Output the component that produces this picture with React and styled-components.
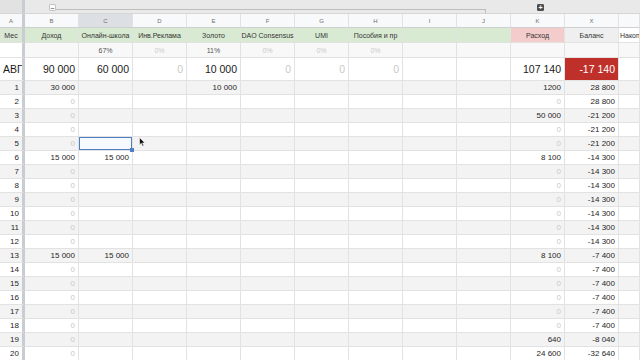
import React from "react";
import styled, { createGlobalStyle } from "styled-components";

const GlobalStyle = createGlobalStyle`
  html, body {
    margin: 0;
    padding: 0;
    background: #fff;
    overflow: hidden;
  }
  body {
    font-family: "Liberation Sans", Arial, sans-serif;
  }
`;

const COLS = "25px repeat(11, 54px) 1fr";
const LETTERS = ["A", "B", "C", "D", "E", "F", "G", "H", "I", "J", "K", "X", ""];
const KEYS = ["A", "B", "C", "D", "E", "F", "G", "H", "I", "J", "K", "X", "N"];

const Sheet = styled.div`
  position: relative;
  width: 640px;
  height: 360px;
  overflow: hidden;
  background: #fff;
  color: #222;
`;

const GroupBar = styled.div`
  display: flex;
  height: 14px;
  background: #e9e9e9;
  border-bottom: 1px solid #d6d6d6;
  box-sizing: border-box;
`;

const FrozenStub = styled.div`
  width: 25px;
  flex: none;
  background: #e2e2e2;
  border-right: 3px solid #c9ccd0;
  box-sizing: border-box;
`;

const GroupTrack = styled.div`
  display: flex;
  align-items: flex-start;
  padding: 4px 0 0 24px;
`;

const GroupButton = styled.div`
  width: 7px;
  height: 7px;
  flex: none;
  box-sizing: border-box;
  display: flex;
  align-items: center;
  justify-content: center;
  font-size: 7px;
  line-height: 1;
  font-weight: bold;
  border-radius: 1px;
  background: ${(p) => (p.$dark ? "#4f4f4f" : "#fbfbfb")};
  color: ${(p) => (p.$dark ? "#fff" : "#777")};
  border: 1px solid ${(p) => (p.$dark ? "#4f4f4f" : "#c4c4c4")};
`;

const GroupLine = styled.div`
  width: ${(p) => p.$w}px;
  height: 4px;
  flex: none;
  margin-top: 5px;
  margin-right: 51px;
  border-top: 1px solid #bdbdbd;
  border-right: 1px solid #bdbdbd;
  box-sizing: border-box;
`;

const Row = styled.div`
  display: grid;
  grid-template-columns: ${COLS};
  height: ${(p) => p.$h}px;
  background: ${(p) => p.$bg || "#fff"};
`;

const Cell = styled.div`
  position: relative;
  box-sizing: border-box;
  display: flex;
  align-items: center;
  justify-content: ${(p) =>
    p.$align === "left" ? "flex-start" : p.$align === "center" ? "center" : "flex-end"};
  padding: 0 3px;
  white-space: nowrap;
  overflow: hidden;
  font-size: ${(p) => p.$size || 8}px;
  color: ${(p) => (p.$muted ? "#c9c9c9" : p.$color || "#222")};
  background: ${(p) => p.$bg || "transparent"};
  border-right: ${(p) => (p.$frozen ? "3px solid #c9ccd0" : "1px solid #e2e2e2")};
  border-bottom: 1px solid #e2e2e2;
`;

const HeaderCell = styled(Cell)`
  padding: 0 1px;
  font-size: 7px;
  color: #333;
`;

const SelectedCell = styled(Cell)`
  overflow: visible;
  background: #f6f9fd;
  box-shadow: inset 0 0 0 1px #4f7ec4;
  &::after {
    content: "";
    position: absolute;
    right: -2px;
    bottom: -2px;
    width: 4px;
    height: 4px;
    background: #4f7ec4;
    z-index: 2;
  }
`;

const LetterCell = styled(Cell)`
  font-size: 6px;
  color: #6f6f6f;
  background: ${(p) => (p.$active ? "#dcdfe3" : "#f8f9fa")};
  border-bottom: 1px solid #cfcfcf;
`;

const Pointer = styled.svg`
  position: absolute;
  left: 139px;
  top: 137px;
  width: 7px;
  height: 10px;
`;

const headers = {
  A: ["Мес", "#dbe7d5"],
  B: ["Доход", "#d9ead3"],
  C: ["Онлайн-школа", "#d9ead3"],
  D: ["Инв.Реклама", "#d9ead3"],
  E: ["Золото", "#d9ead3"],
  F: ["DAO Consensus", "#d9ead3"],
  G: ["UMI", "#d9ead3"],
  H: ["Пособия и пр", "#d9ead3"],
  I: ["", "#d9ead3"],
  J: ["", "#d9ead3"],
  K: ["Расход", "#f4cccc"],
  X: ["Баланс", "#efefef"],
  N: ["Накопления", "#fff"],
};

const percents = { C: "67%", D: "0%", E: "11%", F: "0%", G: "0%", H: "0%" };

const avg = { B: "90 000", C: "60 000", D: 0, E: "10 000", F: 0, G: 0, H: 0, K: "107 140", X: "-17 140" };

const zeroRow = (n, X) => ({ n, B: 0, K: 0, X });

const rows = [
  { n: 1, B: "30 000", E: "10 000", K: "1200", X: "28 800" },
  zeroRow(2, "28 800"),
  { n: 3, B: 0, K: "50 000", X: "-21 200" },
  zeroRow(4, "-21 200"),
  zeroRow(5, "-21 200"),
  { n: 6, B: "15 000", C: "15 000", K: "8 100", X: "-14 300" },
  zeroRow(7, "-14 300"),
  zeroRow(8, "-14 300"),
  zeroRow(9, "-14 300"),
  zeroRow(10, "-14 300"),
  zeroRow(11, "-14 300"),
  zeroRow(12, "-14 300"),
  { n: 13, B: "15 000", C: "15 000", K: "8 100", X: "-7 400" },
  zeroRow(14, "-7 400"),
  zeroRow(15, "-7 400"),
  zeroRow(16, "-7 400"),
  zeroRow(17, "-7 400"),
  zeroRow(18, "-7 400"),
  { n: 19, B: 0, K: "640", X: "-8 040" },
  { n: 20, B: 0, K: "24 600", X: "-32 640" },
];

const App = () => {
  return (
    <>
      <GlobalStyle />
      <Sheet>
        <GroupBar>
          <FrozenStub />
          <GroupTrack>
            <GroupButton>–</GroupButton>
            <GroupLine $w={430} />
            <GroupButton $dark>+</GroupButton>
          </GroupTrack>
        </GroupBar>

        <Row $h={14}>
          {LETTERS.map((l, i) => (
            <LetterCell key={i} $align="center" $frozen={i === 0} $active={l === "C"}>
              {l}
            </LetterCell>
          ))}
        </Row>

        <Row $h={15}>
          {KEYS.map((k, i) => (
            <HeaderCell
              key={k}
              $align={k === "N" ? "left" : "center"}
              $frozen={i === 0}
              $bg={headers[k][1]}
            >
              {headers[k][0]}
            </HeaderCell>
          ))}
        </Row>

        <Row $h={15} $bg="#f8f8f8">
          {KEYS.map((k, i) => (
            <Cell
              key={k}
              $align="center"
              $frozen={i === 0}
              $size={7}
              $color="#555"
              $muted={percents[k] === "0%"}
              $bg={i === 0 ? "#fff" : undefined}
            >
              {percents[k]}
            </Cell>
          ))}
        </Row>

        <Row $h={23}>
          {KEYS.map((k, i) => (
            <Cell
              key={k}
              $align={i === 0 ? "left" : "right"}
              $frozen={i === 0}
              $size={10.5}
              $muted={avg[k] === 0}
              $bg={k === "X" ? "#c0302a" : undefined}
              $color={k === "X" ? "#fff" : "#1a1a1a"}
            >
              {i === 0 ? "АВГ" : avg[k]}
            </Cell>
          ))}
        </Row>

        {rows.map((r) => (
          <Row key={r.n} $h={14} $bg={r.n % 2 ? "#f3f3f3" : "#fff"}>
            {KEYS.map((k, i) => {
              const v = i === 0 ? r.n : r[k];
              const Comp = r.n === 5 && k === "C" ? SelectedCell : Cell;
              return (
                <Comp key={k} $frozen={i === 0} $muted={v === 0} $color="#262626">
                  {v === undefined ? "" : v}
                </Comp>
              );
            })}
          </Row>
        ))}

        <Pointer viewBox="0 0 7 10">
          <path d="M0.5 0.5 L0.5 8 L2.3 6.3 L3.6 9.3 L4.8 8.8 L3.6 5.9 L6 5.9 Z" fill="#111" stroke="#fff" strokeWidth="0.6" />
        </Pointer>
      </Sheet>
    </>
  );
};

export default App;
